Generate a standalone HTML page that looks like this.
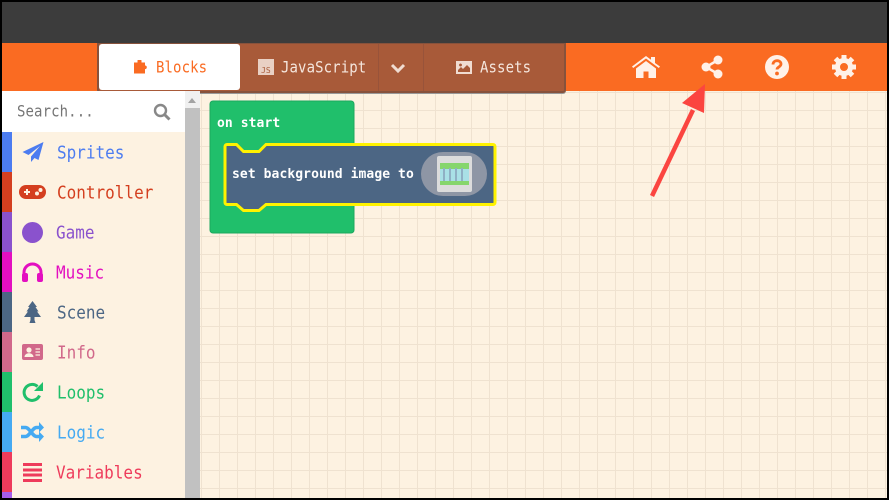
<!DOCTYPE html>
<html><head><meta charset="utf-8">
<style>
*{box-sizing:border-box;margin:0;padding:0}
html,body{width:889px;height:500px;overflow:hidden;background:#000}
body{position:relative;font-family:"DejaVu Sans Mono","Liberation Mono",monospace}
.a{position:absolute}
.t{position:absolute;white-space:nowrap;font-size:16px;line-height:20px;transform:scaleY(1.12);transform-origin:center}
.b{position:absolute;white-space:nowrap;font-size:13px;line-height:20px;color:#fff;font-weight:700;letter-spacing:.08px}
</style></head><body>
<div class="a" style="left:2px;top:2px;width:885px;height:41px;background:#3c3c3c"></div>
<div class="a" style="left:2px;top:43px;width:885px;height:48px;background:#fa6b22"></div>
<!-- canvas -->
<div class="a" style="left:200px;top:91px;width:687px;height:407px;background-color:#fdf2e1;background-image:linear-gradient(to right,#efe2d0 1px,transparent 1px),linear-gradient(to bottom,#efe2d0 1px,transparent 1px);background-size:18px 18px;background-position:1px 1px"></div>
<!-- tabs -->
<div class="a" style="left:97px;top:43px;width:469px;height:50px;background:#a85a39;border:2px solid #87523c;border-top:1px solid #87523c;border-radius:0 0 3px 3px;box-shadow:0 1px 0 #999"></div>
<div class="a" style="left:99px;top:44px;width:141px;height:46px;background:#fff;border-radius:3px"></div>
<div class="a" style="left:378px;top:44px;width:46px;height:47px;border-left:1px solid #98533a;border-right:1px solid #98533a"></div>
<svg class="a" style="left:134px;top:60px" width="13" height="14" viewBox="0 0 13 14"><path d="M0 2.500h3.500V1a2 2 0 0 1 4 0v1.500H11V5.500a1.800 1.800 0 0 1 0 3.600V13.500H0z" fill="#fa6b22"/></svg>
<div class="t" style="left:156px;top:58px;font-size:14px;color:#fa6b22;letter-spacing:.1px">Blocks</div>
<div class="a" style="left:258px;top:59px;width:16px;height:16px;background:#e9d0c4;color:#a85a39;font-size:8px;line-height:9px;padding:7px 0 0 3px">JS</div>
<div class="t" style="left:281px;top:58px;font-size:14px;color:#f5e6dd;letter-spacing:.1px">JavaScript</div>
<svg class="a" style="left:390px;top:63px" width="16" height="11" viewBox="0 0 16 11"><path d="M2 2l6 6 6-6" fill="none" stroke="#f0dcd1" stroke-width="3"/></svg>
<svg class="a" style="left:456px;top:61px" width="16" height="13" viewBox="0 0 16 13"><path fill-rule="evenodd" d="M0 0h16v13H0zM2 11h12V7l-3-3-4 4-2-2-3 3zM4.500 2.500a1.500 1.500 0 1 0 .01 0z" fill="#f0dcd1"/></svg>
<div class="t" style="left:480px;top:58px;font-size:14px;color:#f5e6dd;letter-spacing:.1px">Assets</div>
<!-- right icons -->
<svg class="a" style="left:631px;top:55px" width="30" height="24" viewBox="0 0 30 24"><path d="M1 11.500L15 1l5 3.800V2h4v6l5 3.500-1.200 1.500L15 3.500 2.200 13z" fill="#fff1e8"/><path d="M5 13.500L15 6l10 7.500V23h-7.500v-6.500h-5V23H5z" fill="#fff1e8"/></svg>
<svg class="a" style="left:700px;top:55px" width="24" height="24" viewBox="0 0 24 24"><path d="M18 5L6 12l12 7" fill="none" stroke="#fff1e8" stroke-width="2.500"/><circle cx="18" cy="5" r="4.500" fill="#fff1e8"/><circle cx="6" cy="12" r="4.500" fill="#fff1e8"/><circle cx="18" cy="19" r="4.500" fill="#fff1e8"/></svg>
<svg class="a" style="left:765px;top:55px" width="24" height="24" viewBox="0 0 24 24"><circle cx="12" cy="12" r="12" fill="#fff1e8"/><path d="M8 9.500c0-5 8-5 8-.5 0 3-4 2.800-4 5.500" fill="none" stroke="#fa6b22" stroke-width="2.800"/><circle cx="12" cy="18.500" r="1.900" fill="#fa6b22"/></svg>
<svg class="a" style="left:832px;top:55px" width="24" height="24" viewBox="0 0 24 24"><circle cx="12" cy="12" r="6.500" fill="none" stroke="#fff1e8" stroke-width="5"/><g stroke="#fff1e8" stroke-width="5"><path d="M12 0v5M12 19v5M0 12h5M19 12h5M3.500 3.500l3.500 3.500M17 17l3.500 3.500M3.500 20.500L7 17M17 7l3.500-3.500"/></g></svg>
<!-- sidebar -->
<div class="a" style="left:2px;top:91px;width:183px;height:41px;background:#fff"></div>
<div class="t" style="left:17px;top:102px;font-size:14px;color:#757575;letter-spacing:.1px">Search...</div>
<svg class="a" style="left:153px;top:103px" width="18" height="18" viewBox="0 0 18 18"><circle cx="7.500" cy="7.500" r="5.500" fill="none" stroke="#888" stroke-width="2.400"/><path d="M11.500 11.500L16.500 16.500" stroke="#888" stroke-width="3"/></svg>
<div class="a" style="left:2px;top:132px;width:183px;height:366px;background:#fdf2e1"></div>
<div class="a" style="left:185px;top:91px;width:15px;height:407px;background:#f0f0f0"></div>
<div class="a" style="left:185px;top:108px;width:15px;height:390px;background:#c1c1c1"></div>
<div class="a" style="left:188px;top:98px;width:0;height:0;border-left:4px solid transparent;border-right:4px solid transparent;border-bottom:5px solid #a3a3a3"></div>
<!-- color bars -->
<div class="a" style="left:2px;top:132px;width:10px;height:40px;background:#4c7cf0"></div>
<div class="a" style="left:2px;top:172px;width:10px;height:40px;background:#d43f1f"></div>
<div class="a" style="left:2px;top:212px;width:10px;height:40px;background:#8a52cd"></div>
<div class="a" style="left:2px;top:252px;width:10px;height:40px;background:#e30fc0"></div>
<div class="a" style="left:2px;top:292px;width:10px;height:40px;background:#4c6684"></div>
<div class="a" style="left:2px;top:332px;width:10px;height:40px;background:#d1688a"></div>
<div class="a" style="left:2px;top:372px;width:10px;height:40px;background:#20bf6b"></div>
<div class="a" style="left:2px;top:412px;width:10px;height:40px;background:#45aaf2"></div>
<div class="a" style="left:2px;top:452px;width:10px;height:40px;background:#ee3b5b"></div>
<div class="a" style="left:2px;top:492px;width:10px;height:6px;background:#a55eea"></div>
<!-- labels -->
<div class="t" style="left:57px;top:143px;color:#4c7cf0">Sprites</div>
<div class="t" style="left:57px;top:183px;color:#d43f1f">Controller</div>
<div class="t" style="left:56px;top:223px;color:#8a52cd">Game</div>
<div class="t" style="left:56px;top:263px;color:#e30fc0">Music</div>
<div class="t" style="left:57px;top:303px;color:#4c6684">Scene</div>
<div class="t" style="left:57px;top:343px;color:#d1688a">Info</div>
<div class="t" style="left:57px;top:383px;color:#20bf6b">Loops</div>
<div class="t" style="left:57px;top:423px;color:#45aaf2">Logic</div>
<div class="t" style="left:56px;top:463px;color:#ee3b5b">Variables</div>
<!-- side icons -->
<svg class="a" style="left:22px;top:141px" width="22" height="22" viewBox="0 0 22 22"><path d="M21.500 1L.5 11l6 3L18 5 9 15.500V21l3.500-4 4 2z" fill="#4c7cf0"/></svg>
<svg class="a" style="left:19px;top:185px" width="27" height="14" viewBox="0 0 27 14"><rect width="27" height="14" rx="7" fill="#d43f1f"/><path d="M5 7h6M8 4v6" stroke="#fdf2e1" stroke-width="2"/><circle cx="18" cy="8.500" r="2" fill="#fdf2e1"/><circle cx="21.500" cy="5" r="2" fill="#fdf2e1"/></svg>
<div class="a" style="left:22px;top:222px;width:21px;height:21px;border-radius:50%;background:#8a52cd"></div>
<svg class="a" style="left:22px;top:262px" width="21" height="20" viewBox="0 0 21 20"><path d="M2 13v-2.500a8.500 8.500 0 0 1 17 0V13" fill="none" stroke="#e30fc0" stroke-width="3"/><rect x="0" y="11" width="6" height="9" rx="2" fill="#e30fc0"/><rect x="15" y="11" width="6" height="9" rx="2" fill="#e30fc0"/></svg>
<svg class="a" style="left:24px;top:301px" width="17" height="22" viewBox="0 0 17 22"><path d="M8.500 0L13 6h-1.500l3 4.500H13l4 5.500H10.500v3l1 3h-6l1-3v-3H0l4-5.500H2.500l3-4.500H4z" fill="#4c6684"/></svg>
<svg class="a" style="left:22px;top:344px" width="21" height="16" viewBox="0 0 21 16"><rect width="21" height="16" rx="2" fill="#d1688a"/><circle cx="7" cy="6" r="2.600" fill="#fdf2e1"/><path d="M2.500 13c0-5 9-5 9 0z" fill="#fdf2e1"/><path d="M13.500 5H18M13.500 8H18M13.500 11H18" stroke="#fdf2e1" stroke-width="1.300"/></svg>
<svg class="a" style="left:22px;top:382px" width="21" height="21" viewBox="0 0 21 21"><path d="M17.500 13.500A8 8 0 1 1 15.500 4.500" fill="none" stroke="#20bf6b" stroke-width="3"/><path d="M21 0v9h-9z" fill="#20bf6b"/></svg>
<svg class="a" style="left:21px;top:422px" width="23" height="20" viewBox="0 0 23 20"><path d="M0 5.500h4.500c4 0 7 9 11 9H19M0 14.500h4.500c4 0 7-9 11-9H19" fill="none" stroke="#45aaf2" stroke-width="3.500"/><path d="M18 0l5 5.500-5 5zM18 9.500l5 5-5 5.500z" fill="#45aaf2"/></svg>
<svg class="a" style="left:23px;top:463px" width="19" height="19" viewBox="0 0 19 19"><path d="M0 1.500h19M0 7h19M0 12h19M0 17.500h19" stroke="#ee3b5b" stroke-width="3"/></svg>
<!-- blocks -->
<svg class="a" style="left:205px;top:95px" width="300" height="145" viewBox="205 95 300 145">
<rect x="210" y="101" width="144" height="132" rx="3" fill="#20bf6b" stroke="#1ca85e"/>
<path d="M227 144.500h9.500l7 7h15.500l7-7h227a2 2 0 0 1 2 2v56a2 2 0 0 1-2 2H266l-7 6h-15.500l-7-6H227a2 2 0 0 1-2-2v-56a2 2 0 0 1 2-2z" fill="#4c6684" stroke="#fff200" stroke-width="3"/>
<rect x="421" y="152" width="66" height="44" rx="22" fill="#8e96a5"/>
<rect x="437" y="156" width="35" height="36" rx="2" fill="#dcdcdc"/>
<rect x="440" y="163" width="29" height="22" fill="#a9e0e6"/>
<rect x="440" y="163" width="29" height="6" fill="#86d66d"/>
<rect x="440" y="181" width="29" height="4" fill="#86d66d"/>
<path d="M444 168v13M450 168v13M456 168v13M462 168v13" stroke="#8fb0c4" stroke-width="2"/>
</svg>
<div class="b" style="left:217px;top:114px">on start</div>
<div class="b" style="left:232px;top:165px">set background image to</div>
<!-- arrow -->
<svg class="a" style="left:640px;top:80px" width="80" height="125" viewBox="640 80 80 125"><path d="M652 196L693 110" stroke="#fb4540" stroke-width="4.500"/><path d="M705 84L682 103 704 113z" fill="#fb4540"/></svg>
</body></html>
